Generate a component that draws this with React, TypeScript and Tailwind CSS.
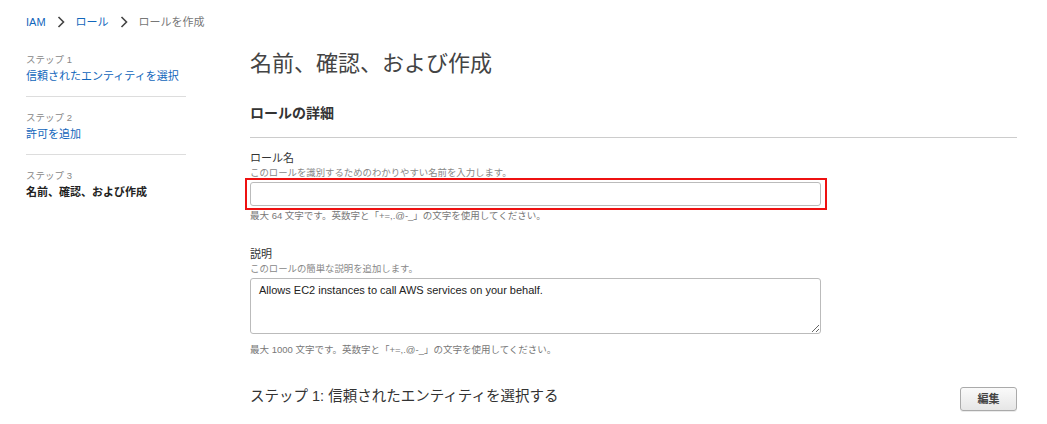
const font = "font-['Liberation_Sans','Noto_Sans_CJK_JP',sans-serif]";

const Chevron = () => (
  <svg width="8" height="12" viewBox="0 0 8 12" className="shrink-0">
    <polyline points="1.5,1 6.5,6 1.5,11" fill="none" stroke="#444" strokeWidth="1.6" />
  </svg>
);

const steps = [
  { label: 'ステップ 1', title: '信頼されたエンティティを選択', active: false },
  { label: 'ステップ 2', title: '許可を追加', active: false },
  { label: 'ステップ 3', title: '名前、確認、および作成', active: true },
];

export default function App() {
  return (
    <div className={`${font} w-[1047px] h-[424px] overflow-hidden bg-white px-[26px] pt-[14px]`}>
      <nav className="flex items-center gap-[11px] text-[11px] leading-[16px]">
        <span className="text-[#1166bb]">IAM</span>
        <Chevron />
        <span className="text-[#1166bb]">ロール</span>
        <Chevron />
        <span className="text-[#777]">ロールを作成</span>
      </nav>

      <div className="flex gap-[64px]">
        <aside className="w-[160px] shrink-0 pt-[23px]">
          {steps.map((s, i) => (
            <div key={s.label}>
              {i > 0 && <div className="h-px bg-[#dddddd] mt-[12px] mb-[14px]" />}
              <div className="text-[9.5px] leading-[14px] text-[#888]">{s.label}</div>
              <div
                className={
                  s.active
                    ? 'mt-[1px] text-[11px] leading-[16px] font-bold text-[#222]'
                    : 'mt-[1px] text-[11px] leading-[16px] text-[#1166bb]'
                }
              >
                {s.title}
              </div>
            </div>
          ))}
        </aside>

        <main className="flex-1 pr-[4px]">
          <h1 className="mt-[18px] text-[22px] leading-[32px] font-normal text-[#444]">
            名前、確認、および作成
          </h1>

          <h2 className="mt-[23px] text-[14px] leading-[20px] font-bold text-[#333]">ロールの詳細</h2>
          <div className="mt-[14px] h-px bg-[#cccccc]" />

          <div className="mt-[12px] w-[571px]">
            <div className="text-[11px] leading-[16px] text-[#333]">ロール名</div>
            <div className="text-[9.4px] leading-[13px] text-[#888]">
              このロールを識別するためのわかりやすい名前を入力します。
            </div>
            <div className="-ml-[5px] mt-[-1px] w-[582px] border-2 border-[#ee1111] pt-[2px] pb-[2px] pl-[3px] pr-[4px]">
              <input
                type="text"
                className="block w-full h-[24px] rounded-[3px] border border-[#bbbbbb] bg-white outline-none"
              />
            </div>
            <div className="mt-[-1px] text-[9.5px] leading-[14px] text-[#777]">
              最大 64 文字です。英数字と「+=,.@-_」の文字を使用してください。
            </div>

            <div className="mt-[23px] text-[11px] leading-[16px] text-[#333]">説明</div>
            <div className="text-[9.4px] leading-[13px] text-[#888]">このロールの簡単な説明を追加します。</div>
            <textarea
              className="mt-[3px] block w-full h-[56px] rounded-[3px] border border-[#bbbbbb] bg-white px-[8px] py-[3px] text-[11px] leading-[16px] text-[#222] outline-none"
              defaultValue="Allows EC2 instances to call AWS services on your behalf."
            />
            <div className="mt-[9px] text-[9.5px] leading-[14px] text-[#777]">
              最大 1000 文字です。英数字と「+=,.@-_」の文字を使用してください。
            </div>
          </div>

          <div className="mt-[28px] flex items-start justify-between">
            <h3 className="text-[14.5px] leading-[22px] font-normal text-[#333]">
              ステップ 1: 信頼されたエンティティを選択する
            </h3>
            <button className="mt-[2px] w-[57px] h-[24px] rounded-[3px] border border-[#aaaaaa] bg-gradient-to-b from-[#fafafa] to-[#e6e6e6] text-[11px] font-bold text-[#444] shadow-[0_1px_0_rgba(0,0,0,0.08)]">
              編集
            </button>
          </div>
        </main>
      </div>
    </div>
  );
}
